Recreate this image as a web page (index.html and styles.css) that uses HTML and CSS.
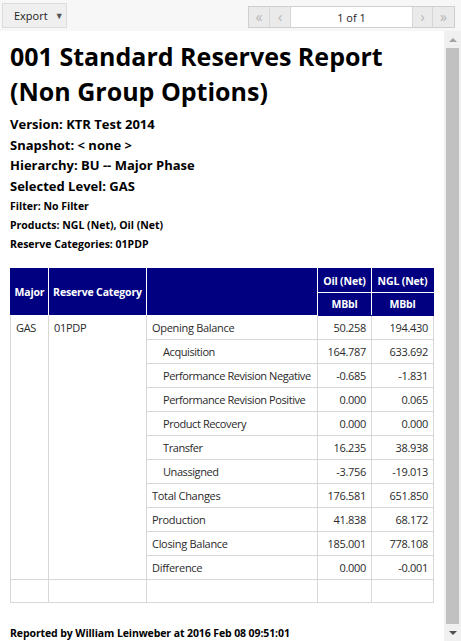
FILE: index.html
```html
<!DOCTYPE html>
<html>
<head>
<meta charset="utf-8">
<link rel="stylesheet" href="styles.css">
</head>
<body>
<div class="toolbar">
  <button class="export">Export <span class="caret">&#9660;</span></button>
  <div class="pager">
    <span class="pbtn">&laquo;</span>
    <span class="pbtn">&lsaquo;</span>
    <span class="pinput">1 of 1</span>
    <span class="pbtn">&rsaquo;</span>
    <span class="pbtn">&raquo;</span>
  </div>
</div>
<div class="viewport">
  <div class="report">
    <h1 class="title">001 Standard Reserves Report (Non Group Options)</h1>
    <div class="meta big">Version: KTR Test 2014</div>
    <div class="meta big">Snapshot: &lt; none &gt;</div>
    <div class="meta big">Hierarchy: BU -- Major Phase</div>
    <div class="meta big">Selected Level: GAS</div>
    <div class="meta small">Filter: No Filter</div>
    <div class="meta small">Products: NGL (Net), Oil (Net)</div>
    <div class="meta small">Reserve Categories: 01PDP</div>

    <table class="grid">
      <colgroup>
        <col class="c-major"><col class="c-cat"><col class="c-label"><col class="c-oil"><col class="c-ngl">
      </colgroup>
      <thead>
        <tr class="h1">
          <th rowspan="2">Major</th>
          <th rowspan="2">Reserve Category</th>
          <th rowspan="2"></th>
          <th>Oil (Net)</th>
          <th>NGL (Net)</th>
        </tr>
        <tr class="h2">
          <th>MBbl</th>
          <th>MBbl</th>
        </tr>
      </thead>
      <tbody>
        <tr><td rowspan="11" class="top">GAS</td><td rowspan="11" class="top">01PDP</td><td>Opening Balance</td><td class="num">50.258</td><td class="num">194.430</td></tr>
        <tr><td class="ind">Acquisition</td><td class="num">164.787</td><td class="num">633.692</td></tr>
        <tr><td class="ind">Performance Revision Negative</td><td class="num">-0.685</td><td class="num">-1.831</td></tr>
        <tr><td class="ind">Performance Revision Positive</td><td class="num">0.000</td><td class="num">0.065</td></tr>
        <tr><td class="ind">Product Recovery</td><td class="num">0.000</td><td class="num">0.000</td></tr>
        <tr><td class="ind">Transfer</td><td class="num">16.235</td><td class="num">38.938</td></tr>
        <tr><td class="ind">Unassigned</td><td class="num">-3.756</td><td class="num">-19.013</td></tr>
        <tr><td>Total Changes</td><td class="num">176.581</td><td class="num">651.850</td></tr>
        <tr><td>Production</td><td class="num">41.838</td><td class="num">68.172</td></tr>
        <tr><td>Closing Balance</td><td class="num">185.001</td><td class="num">778.108</td></tr>
        <tr><td>Difference</td><td class="num">0.000</td><td class="num">-0.001</td></tr>
        <tr class="empty"><td></td><td></td><td></td><td></td><td></td></tr>
      </tbody>
    </table>

    <div class="footer">Reported by William Leinweber at 2016 Feb 08 09:51:01</div>
  </div>
  <div class="scrollbar">
    <div class="arrow up"></div>
    <div class="track"><div class="thumb"></div></div>
    <div class="arrow down"></div>
  </div>
</div>
</body>
</html>
```

FILE: styles.css
```css
* { box-sizing: border-box; }
html, body { margin: 0; padding: 0; }
body {
  width: 461px;
  height: 641px;
  overflow: hidden;
  font-family: "Open Sans", "Noto Sans", sans-serif;
  color: #000;
  background: #fff;
}
.toolbar {
  height: 31px;
  background: #f7f7f7;
  display: flex;
  align-items: flex-start;
  justify-content: space-between;
  padding: 3px 6px 0 2px;
}
.export {
  height: 25px;
  width: 65px;
  background: #efefef;
  border: 1px solid #dcdcdc;
  font-family: "Open Sans", sans-serif;
  font-size: 11px;
  color: #222;
  padding: 0 0 0 11px;
  text-align: left;
  display: flex;
  align-items: center;
  gap: 7px;
}
.caret { font-size: 9px; color: #555; }
.pager {
  margin-top: 3px;
  display: flex;
  height: 22px;
  border: 1px solid #cfcfcf;
  background: #eaeaea;
}
.pbtn {
  width: 21px;
  display: flex;
  align-items: center;
  justify-content: center;
  color: #b5b5b5;
  font-size: 14px;
  border-right: 1px solid #d6d6d6;
  line-height: 1;
}
.pbtn:last-child { border-right: none; }
.pbtn:nth-child(4) { border-left: 1px solid #d6d6d6; }
.pinput {
  width: 121px;
  background: #fff;
  font-size: 11px;
  display: flex;
  align-items: center;
  justify-content: center;
  color: #222;
}
.viewport {
  display: flex;
  height: 610px;
}
.report {
  flex: 1;
  overflow: hidden;
  padding: 8px 0 0 10px;
}
.title {
  margin: 0 0 5px 0;
  font-size: 25px;
  line-height: 35px;
  font-weight: 700;
  width: 400px;
}
.meta { font-weight: 700; }
.meta.big { font-size: 13px; line-height: 20.5px; }
.meta.small { font-size: 10.5px; line-height: 19px; }
.meta.big + .meta.small { margin-top: 1px; }

.grid {
  margin-top: 14px;
  border-collapse: collapse;
  table-layout: fixed;
  width: 423px;
  font-size: 11px;
}
.c-major { width: 38px; }
.c-cat { width: 98px; }
.c-label { width: 171px; }
.c-oil { width: 54px; }
.c-ngl { width: 62px; }
.grid th {
  background: #000080;
  color: #fff;
  font-weight: 700;
  font-size: 10.5px;
  letter-spacing: -0.15px;
  border: 1px solid #fff;
  text-align: center;
  padding: 0 2px;
}
.grid tr.h1 th { height: 24px; }
.grid tr.h2 th { height: 23px; }
.grid tr.h1 th:first-child { border-left-color: #000080; }
.grid tr.h1 th:last-child, .grid tr.h2 th:last-child { border-right-color: #000080; }
.grid tr.h1 th { border-top-color: #000080; }
.grid tr.h2 th { border-bottom-color: #000080; }
.grid td {
  border: 1px solid #d7d7d7;
  height: 24px;
  padding: 0 5px;
  color: #2a2a2a;
  letter-spacing: -0.3px;
  white-space: nowrap;
}
.grid td.top { vertical-align: top; padding-top: 4px; }
.grid td.ind { padding-left: 16px; letter-spacing: -0.42px; }
.grid td.num { text-align: right; }
.grid tr.empty td { height: 23px; }
.footer {
  margin-top: 23px;
  font-size: 10.5px;
  letter-spacing: -0.1px;
  font-weight: 700;
}
.scrollbar {
  width: 17px;
  background: #f0f0f0;
  display: flex;
  flex-direction: column;
}
.arrow {
  height: 17px;
  display: flex;
  align-items: center;
  justify-content: center;
}
.arrow::before {
  content: "";
  width: 0;
  height: 0;
  border-left: 4px solid transparent;
  border-right: 4px solid transparent;
}
.arrow.up::before { border-bottom: 4px solid #a3a3a3; }
.arrow.down::before { border-top: 4px solid #505050; }
.track {
  flex: 1;
  padding: 0 2px;
}
.thumb {
  height: 100%;
  background: #c1c1c1;
}
```
